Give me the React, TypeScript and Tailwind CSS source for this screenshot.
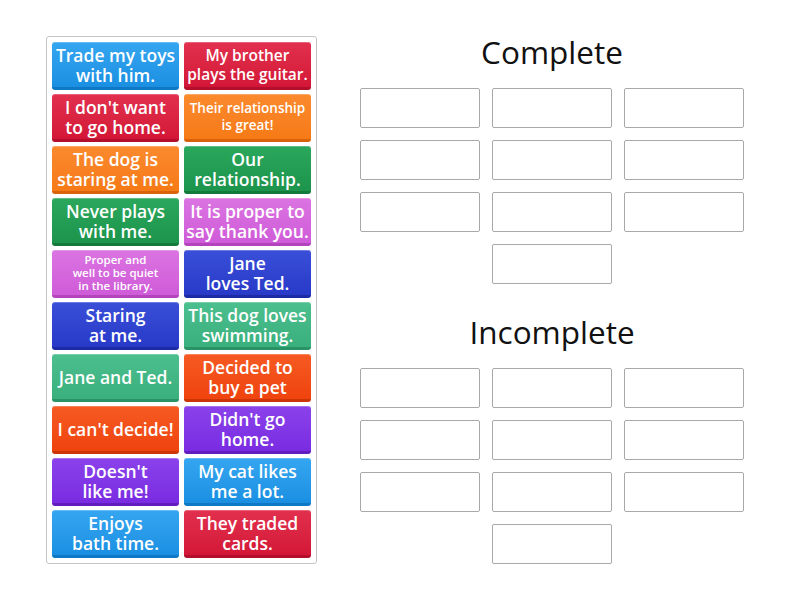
const tones = {
  blue: "bg-gradient-to-b from-[#35a6f0] to-[#1a8fe2] border-b-[3px] border-[#0e78c4]",
  red: "bg-gradient-to-b from-[#e1304e] to-[#d31637] border-b-[3px] border-[#b30f2c]",
  orange: "bg-gradient-to-b from-[#fb8a2e] to-[#f67a16] border-b-[3px] border-[#d9630a]",
  green: "bg-gradient-to-b from-[#2aa85c] to-[#1d944c] border-b-[3px] border-[#147a3c]",
  pink: "bg-gradient-to-b from-[#db74e2] to-[#cf5bd8] border-b-[3px] border-[#b444bd]",
  navy: "bg-gradient-to-b from-[#3a4fd8] to-[#2839c8] border-b-[3px] border-[#1d2aa6]",
  teal: "bg-gradient-to-b from-[#4cbf8e] to-[#39b07d] border-b-[3px] border-[#2a9366]",
  flame: "bg-gradient-to-b from-[#f65a22] to-[#ef430c] border-b-[3px] border-[#cc3505]",
  purple: "bg-gradient-to-b from-[#8a42ea] to-[#7a2be2] border-b-[3px] border-[#621dc0]",
};

type Tone = keyof typeof tones;

const sizes = {
  lg: "text-[17.5px] leading-[20px]",
  md: "text-[15.5px] leading-[19px]",
  sm: "text-[13.5px] leading-[17px]",
  xs: "text-[11.5px] leading-[13px]",
};

type Size = keyof typeof sizes;

const tiles: [string[], Tone, Size][] = [
  [["Trade my toys", "with him."], "blue", "lg"],
  [["My brother", "plays the guitar."], "red", "md"],
  [["I don't want", "to go home."], "red", "lg"],
  [["Their relationship", "is great!"], "orange", "sm"],
  [["The dog is", "staring at me."], "orange", "lg"],
  [["Our", "relationship."], "green", "lg"],
  [["Never plays", "with me."], "green", "lg"],
  [["It is proper to", "say thank you."], "pink", "lg"],
  [["Proper and", "well to be quiet", "in the library."], "pink", "xs"],
  [["Jane", "loves Ted."], "navy", "lg"],
  [["Staring", "at me."], "navy", "lg"],
  [["This dog loves", "swimming."], "teal", "lg"],
  [["Jane and Ted."], "teal", "lg"],
  [["Decided to", "buy a pet"], "flame", "lg"],
  [["I can't decide!"], "flame", "lg"],
  [["Didn't go", "home."], "purple", "lg"],
  [["Doesn't", "like me!"], "purple", "lg"],
  [["My cat likes", "me a lot."], "blue", "lg"],
  [["Enjoys", "bath time."], "blue", "lg"],
  [["They traded", "cards."], "red", "lg"],
];

function Tile({ lines, tone, size }: { lines: string[]; tone: Tone; size: Size }) {
  return (
    <div
      className={`h-[48px] rounded-[3px] flex flex-col items-center justify-center text-center text-white font-semibold shadow-[inset_0_1px_0_rgba(255,255,255,0.25)] ${tones[tone]} ${sizes[size]}`}
    >
      {lines.map((l) => (
        <span key={l} className="whitespace-nowrap">
          {l}
        </span>
      ))}
    </div>
  );
}

function Group({ title, count }: { title: string; count: number }) {
  return (
    <div>
      <h2 className="text-[31.5px] leading-[48px] text-center text-[#111] mb-[12px]">{title}</h2>
      <div className="flex flex-wrap justify-center gap-[12px]">
        {Array.from({ length: count }).map((_, i) => (
          <div key={i} className="w-[120px] h-[40px] border border-[#a9a9a9] rounded-[2px] bg-white" />
        ))}
      </div>
    </div>
  );
}

export default function App() {
  return (
    <div
      className="w-[800px] h-[600px] bg-white flex items-start"
      style={{ fontFamily: '"Open Sans", "Noto Sans", sans-serif' }}
    >
      <div className="ml-[46px] mt-[36px] w-[271px] border border-[#c4c4c4] rounded-[3px] p-[5px]">
        <div className="grid grid-cols-2 gap-x-[5px] gap-y-[4px]">
          {tiles.map(([lines, tone, size], i) => (
            <Tile key={i} lines={lines} tone={tone} size={size} />
          ))}
        </div>
      </div>
      <div className="ml-[43px] mt-[28px] w-[384px] flex flex-col gap-[24px]">
        <Group title="Complete" count={10} />
        <Group title="Incomplete" count={10} />
      </div>
    </div>
  );
}
